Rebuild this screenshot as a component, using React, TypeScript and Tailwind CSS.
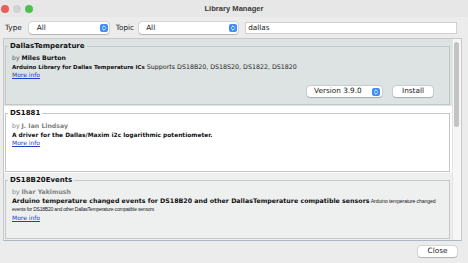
import React from "react";

const Stepper = () => (
  <span className="flex h-[8px] w-[8px] items-center justify-center rounded-[2px] bg-[#3f8ef3]">
    <svg width="6" height="8" viewBox="0 0 6 8">
      <path d="M1.6 3.2 L3 1.8 L4.4 3.2 M1.6 4.8 L3 6.2 L4.4 4.8" stroke="white" strokeWidth="0.9" fill="none" strokeLinecap="round" strokeLinejoin="round" />
    </svg>
  </span>
);

const ctrlShadow = "shadow-[0_0_0_0.5px_rgba(0,0,0,0.16),0_0.5px_1px_rgba(0,0,0,0.18)]";

export default function App() {
  return (
    <div className="flex h-[263px] w-[468px] flex-col overflow-hidden bg-[#ececec] font-['DejaVu_Sans',sans-serif] text-[#1a1a1a]">
      {/* title bar */}
      <div className="grid h-[17px] grid-cols-[1fr_auto_1fr] items-center bg-[#e7e7e7]">
        <div className="flex items-center gap-[4px] pl-[1px]">
          <span className="h-[8px] w-[8px] rounded-full bg-[#ee5c57]" />
          <span className="h-[8px] w-[8px] rounded-full bg-[#d3d3d3]" />
          <span className="h-[8px] w-[8px] rounded-full bg-[#4ec04c]" />
        </div>
        <div className="font-['Liberation_Sans',sans-serif] text-[7.6px] font-bold text-[#3b3b3b]">Library Manager</div>
        <div />
      </div>

      {/* toolbar */}
      <div className="flex h-[21px] items-start pl-[5px] pt-[5px] text-[7.3px]">
        <div className="flex h-[12px] items-center">Type</div>
        <div className={`ml-[7px] flex h-[12px] w-[80px] items-center justify-between rounded-[3px] bg-white pl-[8px] pr-[1px] ${ctrlShadow}`}>
          <span>All</span>
          <Stepper />
        </div>
        <div className="ml-[7px] flex h-[12px] items-center">Topic</div>
        <div className={`ml-[5px] flex h-[12px] w-[99px] items-center justify-between rounded-[3px] bg-white pl-[7px] pr-[1px] ${ctrlShadow}`}>
          <span>All</span>
          <Stepper />
        </div>
        <div className="ml-[7px] flex h-[12px] w-[212px] items-center border border-[#d0d0d0] bg-white pl-[2px]">dallas</div>
      </div>

      {/* list */}
      <div className="ml-[3px] flex h-[203px] w-[459px] border border-[#c8c8c8] border-b-[#a9b8c9] bg-white">
        <div className="h-[201px] w-[448px] overflow-hidden">
          {/* item 1 */}
          <div className="h-[67px] bg-[#dde2e2] pb-[1px] pl-[1px] pr-[2px] pt-[2px]">
            <fieldset className="h-full border border-[#c2c6c6]">
              <legend className="ml-[2px] px-[2px] text-[7px] font-bold leading-[10px] text-[#111]">DallasTemperature</legend>
              <div className="mt-[3px] pl-[6px] pr-[16px]">
                <div className="flex h-[8.5px] items-center whitespace-nowrap text-[6.2px] leading-[8.5px]">
                  <span className="text-[#555]">by&nbsp;</span>
                  <span className="font-bold text-[#111]">Miles Burton</span>
                </div>
                <div className="flex h-[8.5px] items-center whitespace-nowrap leading-[8.5px]">
                  <span className="text-[5.5px] font-bold text-[#111]">Arduino Library for Dallas Temperature ICs</span>
                  <span className="text-[6.3px] text-[#222]">&nbsp;Supports DS18B20, DS18S20, DS1822, DS1820</span>
                </div>
                <div className="flex h-[8.5px] items-center leading-[8.5px]">
                  <span className="text-[6px] text-[#1f3fc4] underline">More info</span>
                </div>
                <div className="mt-[6.5px] flex justify-end gap-[11px] text-[7.3px]">
                  <div className={`flex h-[11px] w-[75px] items-center justify-between rounded-[3px] bg-white pl-[7px] pr-[2px] ${ctrlShadow}`}>
                    <span>Version 3.9.0</span>
                    <Stepper />
                  </div>
                  <div className={`flex h-[11px] w-[40px] items-center justify-center rounded-[3px] bg-white ${ctrlShadow}`}>Install</div>
                </div>
              </div>
            </fieldset>
          </div>

          {/* item 2 */}
          <div className="h-[67px] bg-white pb-[1px] pl-[1px] pr-[2px] pt-[2px]">
            <fieldset className="h-full border border-[#c6c6c6]">
              <legend className="ml-[2px] px-[2px] text-[7px] font-bold leading-[10px] text-[#111]">DS1881</legend>
              <div className="mt-[4px] pl-[6px]">
                <div className="flex h-[8.5px] items-center whitespace-nowrap text-[6.2px] leading-[8.5px] text-[#808080]">
                  <span>by&nbsp;</span>
                  <span className="font-bold">J. Ian Lindsay</span>
                </div>
                <div className="flex h-[8.5px] items-center whitespace-nowrap text-[5.9px] font-bold leading-[8.5px] text-[#111]">
                  <span>A driver for the Dallas/Maxim i2c logarithmic potentiometer.</span>
                </div>
                <div className="flex h-[8.5px] items-center leading-[8.5px]">
                  <span className="text-[6px] text-[#1f3fc4] underline">More info</span>
                </div>
              </div>
            </fieldset>
          </div>

          {/* item 3 */}
          <div className="h-[67px] bg-[#eef0f0] pb-[1px] pl-[1px] pr-[2px] pt-[2px]">
            <fieldset className="h-full border border-[#c6c8c8]">
              <legend className="ml-[2px] px-[2px] text-[7px] font-bold leading-[10px] text-[#111]">DS18B20Events</legend>
              <div className="mt-[3px] pl-[6px]">
                <div className="flex h-[8.5px] items-center whitespace-nowrap text-[6.2px] leading-[8.5px] text-[#808080]">
                  <span>by&nbsp;</span>
                  <span className="font-bold">Ihar Yakimush</span>
                </div>
                <div className="flex h-[8.5px] items-center whitespace-nowrap leading-[8.5px]">
                  <span className="text-[6.3px] font-bold text-[#111]">Arduino temperature changed events for DS18B20 and other DallasTemperature compatible sensors</span>
                  <span className="font-['Liberation_Sans',sans-serif] text-[5.2px] tracking-[-0.15px] text-[#222]">&nbsp;Arduino temperature changed</span>
                </div>
                <div className="flex h-[8.5px] items-center whitespace-nowrap leading-[8.5px]">
                  <span className="font-['Liberation_Sans',sans-serif] text-[5px] tracking-[-0.2px] text-[#222]">events for DS18B20 and other DallasTemperature compatible sensors</span>
                </div>
                <div className="flex h-[8.5px] items-center leading-[8.5px]">
                  <span className="text-[6px] text-[#1f3fc4] underline">More info</span>
                </div>
              </div>
            </fieldset>
          </div>
        </div>

        {/* scrollbar */}
        <div className="w-[9px] border-l border-[#e4e4e4] bg-[#f6f6f6] pt-[3px]">
          <div className="ml-[1px] h-[85px] w-[4.5px] rounded-full bg-[#c3c3c3]" />
        </div>
      </div>

      {/* bottom */}
      <div className="flex justify-end pr-[11px] pt-[5px]">
        <div className={`flex h-[11px] w-[39px] items-center justify-center rounded-[3px] bg-white text-[7.3px] ${ctrlShadow}`}>Close</div>
      </div>
    </div>
  );
}
